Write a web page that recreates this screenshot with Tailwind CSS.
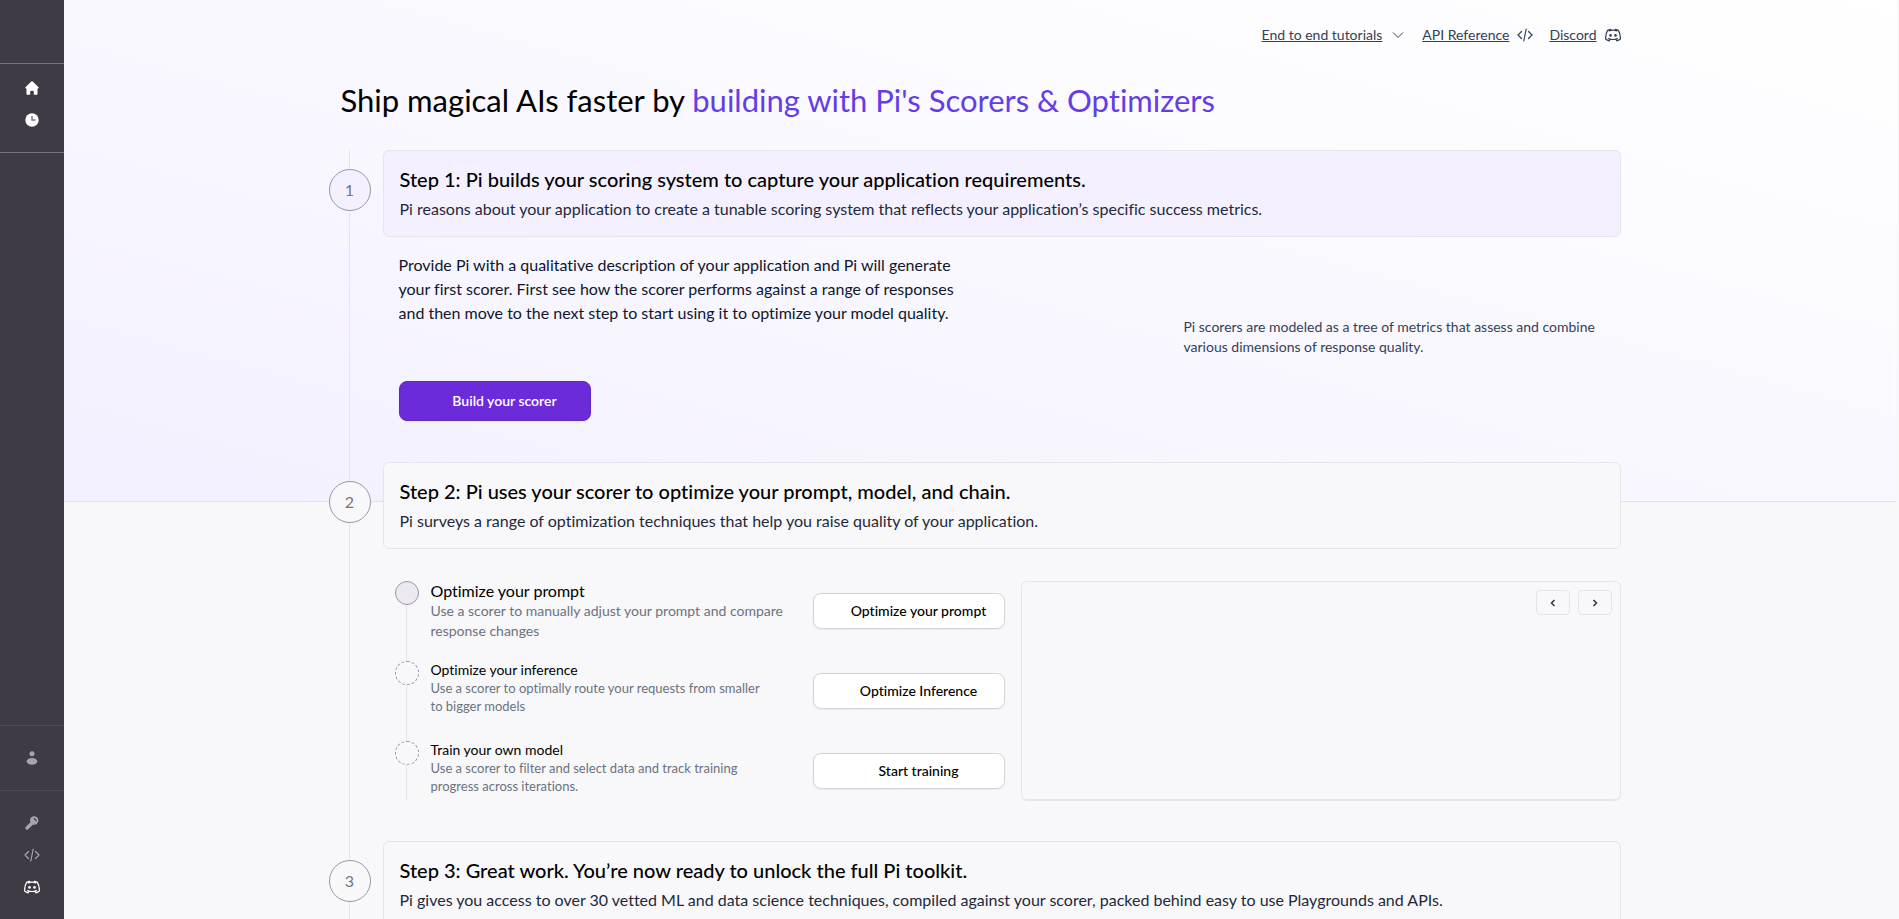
<!DOCTYPE html>
<html lang="en">
<head>
  <meta charset="UTF-8" />
  <meta name="viewport" content="width=device-width, initial-scale=1.0" />
  <title>Pi – Scorers &amp; Optimizers</title>
  <script src="https://cdn.jsdelivr.net/npm/@tailwindcss/browser@4"></script>
</head>

<body class="flex h-screen overflow-hidden bg-[#f8f8fa] pr-0.5 font-['Lato',sans-serif] text-black [font-variant-ligatures:no-common-ligatures]">
  <!-- shared icons -->
  <svg class="hidden">
    <symbol id="code" viewBox="0 0 16 16" fill="none" stroke="currentColor" stroke-width="1.200" stroke-linecap="round" stroke-linejoin="round">
      <path d="M4.500 4.500 1 8l3.500 3.500M11.500 4.500 15 8l-3.500 3.500M9.200 2 6.800 14" />
    </symbol>
    <symbol id="discord" viewBox="0 0 16 16" fill="none" stroke="currentColor" stroke-width="1.200" stroke-linecap="round" stroke-linejoin="round">
      <path d="M6 3.200 5.600 2.300C4.500 2.500 3.500 2.800 2.600 3.300 1.100 5.600.500 8.500.600 12c1.100.9 2.300 1.500 3.600 1.800l.9-1.600M10 3.200l.4-.9c1.100.2 2.100.5 3 1 1.500 2.300 2.100 5.200 2 8.700-1.100.9-2.300 1.500-3.600 1.800l-.9-1.600M4.200 3.900c2.500-.9 5.100-.9 7.600 0M3.600 11.600c2.900 1.200 5.900 1.200 8.800 0" />
      <circle cx="5.500" cy="8.400" r="1.300" fill="currentColor" stroke="none" />
      <circle cx="10.500" cy="8.400" r="1.300" fill="currentColor" stroke="none" />
    </symbol>
  </svg>

  <nav class="flex w-16 shrink-0 flex-col bg-[#3f3b45] text-[#a6a3ae]">
    <div class="h-16 border-b border-[#77737d]"></div>
    <div class="flex flex-col items-center gap-4 border-b border-[#77737d] pt-4 pb-6 text-white">
      <a href="#" aria-label="Home">
        <svg class="size-4" viewBox="0 0 16 16" fill="currentColor"><path d="M8.700 1.600a1 1 0 0 0-1.400 0L1.500 7.300c-.5.500-.2 1.100.4 1.100h.6v5.300c0 .6.4 1 1 1h2.200c.3 0 .5-.2.5-.5v-2.500c0-.5.4-.9.9-.9h1.800c.5 0 .9.4.9.9v2.500c0 .3.2.5.5.5h2.200c.6 0 1-.4 1-1V8.400h.6c.6 0 .9-.6.4-1.100z" /></svg>
      </a>
      <a href="#" aria-label="History">
        <svg class="size-4" viewBox="0 0 16 16"><circle cx="8" cy="8" r="6.700" fill="currentColor" /><path d="M8 4v4h3.500" fill="none" stroke="#77737d" stroke-width="1.400" /></svg>
      </a>
    </div>
    <div class="mt-auto flex h-[65px] items-center justify-center border-t border-[#4d4954]">
      <a href="#" aria-label="Account">
        <svg class="size-4" viewBox="0 0 16 16" fill="currentColor"><circle cx="8" cy="3.800" r="2.500" /><ellipse cx="8" cy="11.300" rx="5.300" ry="3.400" /></svg>
      </a>
    </div>
    <div class="flex flex-col items-center gap-4 border-t border-[#4d4954] pt-6 pb-6">
      <a href="#" aria-label="API keys">
        <svg class="size-4" viewBox="0 0 16 16"><path d="M3 13 8.500 7.700" stroke="currentColor" stroke-width="3.400" stroke-linecap="round" /><circle cx="10.200" cy="5.500" r="4.200" fill="currentColor" /><path d="m10.300 3.600 2 2" stroke="#3f3b45" stroke-width="1.300" stroke-linecap="round" /></svg>
      </a>
      <a href="#" aria-label="API reference"><svg class="size-4"><use href="#code" /></svg></a>
      <a href="#" aria-label="Discord" class="text-white"><svg class="size-4"><use href="#discord" /></svg></a>
    </div>
  </nav>

  <div class="relative flex-1 overflow-hidden">
    <div class="absolute inset-x-0 top-0 h-[502px] border-b border-[#e3e1ea] bg-linear-to-tr from-[#f3f0ff] to-white"></div>

    <div class="relative mx-auto max-w-7xl">
      <header class="flex h-[70px] items-center justify-end gap-4 text-sm text-[#334155]">
        <a href="#" class="flex items-center gap-2">
          <span class="underline">End to end tutorials</span>
          <svg class="size-4" viewBox="0 0 16 16" fill="none" stroke="currentColor"><path d="m3 5.500 5 5 5-5" /></svg>
        </a>
        <a href="#" class="flex items-center gap-2">
          <span class="underline">API Reference</span>
          <svg class="size-4"><use href="#code" /></svg>
        </a>
        <a href="#" class="flex items-center gap-2">
          <span class="underline">Discord</span>
          <svg class="size-4"><use href="#discord" /></svg>
        </a>
      </header>

      <h1 class="pt-2.5 pb-[30px] text-[31px] leading-10">Ship magical AIs faster by <span class="text-[#623de8]">building with Pi's Scorers &amp; Optimizers</span></h1>

      <main class="-ml-3">
        <section class="flex gap-3">
          <div class="flex w-[42px] shrink-0 flex-col items-center">
            <div class="h-[19px] w-px bg-[#e5e5ea]"></div>
            <div class="flex size-[42px] items-center justify-center rounded-full border border-[#9b96ab] bg-[#f4f0ff] text-base text-[#77737d]">1</div>
            <div class="w-px flex-1 bg-[#e5e5ea]"></div>
          </div>
          <div class="flex-1 pb-[41px]">
            <div class="rounded-md border border-[#e5e5ea] bg-[#f4f0ff] px-4 pt-3.5 pb-[15px]">
              <h2 class="text-xl font-medium">Step 1: Pi builds your scoring system to capture your application requirements.</h2>
              <p class="mt-1 text-base text-[#1e293b]">Pi reasons about your application to create a tunable scoring system that reflects your application’s specific success metrics.</p>
            </div>
            <div class="flex justify-between px-4 pt-4">
              <div>
                <p class="text-base text-[#0f172a]">Provide Pi with a qualitative description of your application and Pi will generate<br />your first scorer. First see how the scorer performs against a range of responses<br />and then move to the next step to start using it to optimize your model quality.</p>
                <button class="mt-14 flex h-10 w-48 items-center justify-center rounded-lg border border-[#5b2bb8] bg-[#6b2bd9] pl-5 text-sm font-semibold text-white shadow-xs">Build your scorer</button>
              </div>
              <p class="w-[421px] pt-16 text-sm text-[#334155]">Pi scorers are modeled as a tree of metrics that assess and combine<br />various dimensions of response quality.</p>
            </div>
          </div>
        </section>

        <section class="flex gap-3">
          <div class="flex w-[42px] shrink-0 flex-col items-center">
            <div class="h-[19px] w-px bg-[#e5e5ea]"></div>
            <div class="flex size-[42px] items-center justify-center rounded-full border border-[#9b96ab] bg-[#f8f8fa] text-base text-[#77737d]">2</div>
            <div class="w-px flex-1 bg-[#e5e5ea]"></div>
          </div>
          <div class="flex-1 pb-10">
            <div class="rounded-md border border-[#e5e5ea] bg-[#f8f8fa] px-4 pt-3.5 pb-[15px]">
              <h2 class="text-xl font-medium">Step 2: Pi uses your scorer to optimize your prompt, model, and chain.</h2>
              <p class="mt-1 text-base text-[#1e293b]">Pi surveys a range of optimization techniques that help you raise quality of your application.</p>
            </div>
            <div class="flex gap-4 pt-8">
              <ul class="flex-1 pl-3">
                <li class="flex h-20 gap-3">
                  <div class="flex w-6 flex-col items-center">
                    <div class="size-6 shrink-0 rounded-full border border-[#9b96ab] bg-[#ece9f1]"></div>
                    <div class="w-px flex-1 bg-[#e5e5ea]"></div>
                  </div>
                  <div class="flex-1">
                    <h3 class="text-base leading-5">Optimize your prompt</h3>
                    <p class="text-sm text-[#6b7280]">Use a scorer to manually adjust your prompt and compare<br />response changes</p>
                  </div>
                  <button class="mt-3 flex h-9 w-48 items-center justify-center rounded-lg border border-[#d4d4d8] bg-white pl-5 text-sm font-medium shadow-xs">Optimize your prompt</button>
                </li>
                <li class="flex h-20 gap-3">
                  <div class="flex w-6 flex-col items-center">
                    <div class="size-6 shrink-0 rounded-full border border-dashed border-[#9b96ab]"></div>
                    <div class="w-px flex-1 bg-[#e5e5ea]"></div>
                  </div>
                  <div class="flex-1">
                    <h3 class="text-sm leading-[18px]">Optimize your inference</h3>
                    <p class="text-[13px] leading-[18px] text-[#6b7280]">Use a scorer to optimally route your requests from smaller<br />to bigger models</p>
                  </div>
                  <button class="mt-3 flex h-9 w-48 items-center justify-center rounded-lg border border-[#d4d4d8] bg-white pl-5 text-sm font-medium shadow-xs">Optimize Inference</button>
                </li>
                <li class="flex h-[60px] gap-3">
                  <div class="flex w-6 flex-col items-center">
                    <div class="size-6 shrink-0 rounded-full border border-dashed border-[#9b96ab]"></div>
                    <div class="w-px flex-1 bg-[#e5e5ea]"></div>
                  </div>
                  <div class="flex-1">
                    <h3 class="text-sm leading-[18px]">Train your own model</h3>
                    <p class="text-[13px] leading-[18px] text-[#6b7280]">Use a scorer to filter and select data and track training<br />progress across iterations.</p>
                  </div>
                  <button class="mt-3 flex h-9 w-48 items-center justify-center rounded-lg border border-[#d4d4d8] bg-white pl-5 text-sm font-medium shadow-xs">Start training</button>
                </li>
              </ul>
              <div class="flex w-[600px] items-start justify-end gap-2 rounded-md border border-b-2 border-[#e5e5ea] p-2">
                <button aria-label="Previous" class="flex h-[25px] w-[34px] items-center justify-center rounded border border-[#e5e5ea]">
                  <svg class="size-3" viewBox="0 0 12 12" fill="none" stroke="#333" stroke-width="1.500"><path d="M7.500 3 4.500 6l3 3" /></svg>
                </button>
                <button aria-label="Next" class="flex h-[25px] w-[34px] items-center justify-center rounded border border-[#e5e5ea]">
                  <svg class="size-3" viewBox="0 0 12 12" fill="none" stroke="#333" stroke-width="1.500"><path d="m4.500 3 3 3-3 3" /></svg>
                </button>
              </div>
            </div>
          </div>
        </section>

        <section class="flex gap-3">
          <div class="flex w-[42px] shrink-0 flex-col items-center">
            <div class="h-[19px] w-px bg-[#e5e5ea]"></div>
            <div class="flex size-[42px] items-center justify-center rounded-full border border-[#9b96ab] bg-[#f8f8fa] text-base text-[#77737d]">3</div>
            <div class="w-px flex-1 bg-[#e5e5ea]"></div>
          </div>
          <div class="flex-1 pb-10">
            <div class="rounded-md border border-[#e5e5ea] bg-[#f8f8fa] px-4 pt-3.5 pb-[15px]">
              <h2 class="text-xl font-medium">Step 3: Great work. You’re now ready to unlock the full Pi toolkit.</h2>
              <p class="mt-1 text-base text-[#1e293b]">Pi gives you access to over 30 vetted ML and data science techniques, compiled against your scorer, packed behind easy to use Playgrounds and APIs.</p>
            </div>
          </div>
        </section>
      </main>
    </div>
  </div>
</body>
</html>
